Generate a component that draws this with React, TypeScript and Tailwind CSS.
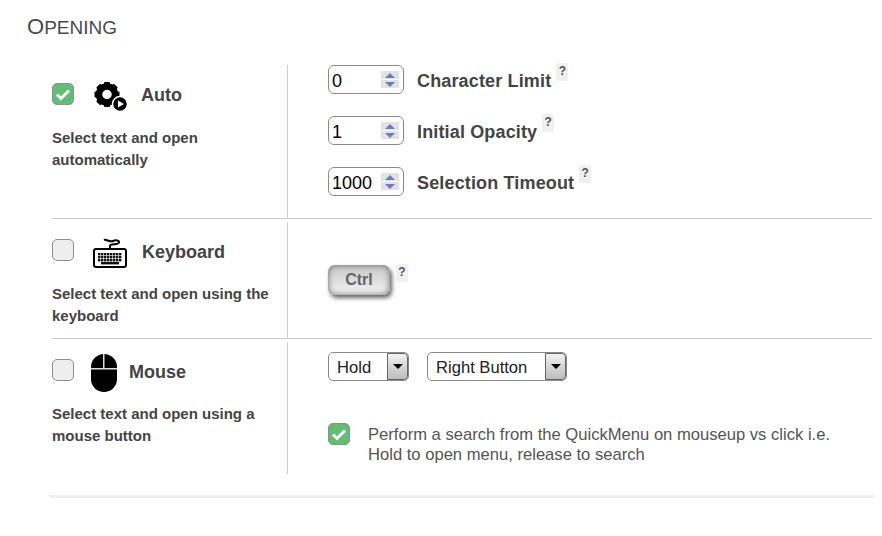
import React from 'react';

function Check({ on, className }: { on?: boolean; className?: string }) {
    return (
        <div className={`w-[22px] h-[22px] shrink-0 rounded-[5px] border border-[#8f8f8f] flex items-center justify-center ${on ? 'bg-[#62bd75]' : 'bg-[#eeeeee]'} ${className ?? ''}`}>
            {on && (
                <svg width="16" height="14" viewBox="0 0 16 14">
                    <path d="M2 7.5 L6 11.5 L14 3.5" fill="none" stroke="#fff" strokeWidth="3" />
                </svg>
            )}
        </div>
    );
}

function GearIcon() {
    const teeth = [0, 45, 90, 135, 180, 225, 270, 315];
    return (
        <svg width="36" height="33" viewBox="0 0 36 33" className="shrink-0 -mb-[3px]">
            {teeth.map((a) => (
                <rect key={a} x="12" y="3" width="6" height="6" rx="1" fill="#000" transform={`rotate(${a} 15 15.5)`} />
            ))}
            <circle cx="15" cy="15.5" r="8" fill="none" stroke="#000" strokeWidth="6.5" />
            <circle cx="28" cy="25" r="7.5" fill="#000" stroke="#fff" strokeWidth="1.5" />
            <path d="M26 21.5 L32 25 L26 28.5 Z" fill="#fff" />
        </svg>
    );
}

function KeyboardIcon() {
    const rows = [15, 18, 21];
    const cols = [6, 9, 12, 15, 18, 21, 24, 27];
    return (
        <svg width="36" height="30" viewBox="0 0 36 30" className="shrink-0">
            <path d="M18 11 V8 C18 5 26 7.5 27 4.5 C27.5 2 23 2 21 3 C18 4.5 14 1 12 2" fill="none" stroke="#000" strokeWidth="2" />
            <rect x="2" y="11" width="32" height="18" rx="2" fill="#fff" stroke="#000" strokeWidth="2" />
            {rows.map((y) =>
                cols.map((x) => <rect key={`${x}-${y}`} x={x} y={y} width="2.4" height="2.4" fill="#111" />)
            )}
            <rect x="9" y="24" width="18" height="2.4" fill="#111" />
        </svg>
    );
}

function MouseIcon() {
    return (
        <svg width="26" height="38" viewBox="0 0 26 38" className="shrink-0">
            <rect x="0" y="0" width="26" height="38" rx="13" fill="#000" />
            <rect x="12" y="0" width="1.5" height="15" fill="#ddd" />
            <rect x="0" y="14" width="26" height="1.5" fill="#ddd" />
        </svg>
    );
}

function Help({ className }: { className?: string }) {
    return (
        <span className={`w-[12px] h-[18px] bg-[#f0f0f0] rounded-[2px] text-[12px] leading-[16px] font-bold text-[#555] text-center self-start ${className ?? ''}`}>
            ?
        </span>
    );
}

function SpinRow({ value, label }: { value: string; label: string }) {
    return (
        <div className="flex items-start h-[29px]">
            <div className="w-[76px] h-[29px] rounded-[6px] border border-[#8a8a8a] flex items-center justify-between pl-[3px] pr-[4px] text-[18px] text-black">
                <span className="pt-[3px]">{value}</span>
                <div className="w-[18px] h-[17px] flex flex-col gap-px">
                    <div className="flex-1 bg-[#e2e2e2] flex items-center justify-center">
                        <div className="w-0 h-0 border-x-[5px] border-x-transparent border-b-[5px] border-b-[#6c7cc4]" />
                    </div>
                    <div className="flex-1 bg-[#e2e2e2] flex items-center justify-center">
                        <div className="w-0 h-0 border-x-[5px] border-x-transparent border-t-[5px] border-t-[#6c7cc4]" />
                    </div>
                </div>
            </div>
            <span className="ml-[13px] mt-[5px] text-[18px] leading-[22px] tracking-[0.15px] font-bold text-[#444]">{label}</span>
            <Help className="ml-[5px] -mt-[2px]" />
        </div>
    );
}

function FakeSelect({ value, width }: { value: string; width: string }) {
    return (
        <div className={`${width} h-[29px] rounded-[5px] border border-[#8a8a8a] flex items-stretch justify-between text-[16.6px] leading-[29px] text-[#222] overflow-hidden`}>
            <span className="pl-[8px]">{value}</span>
            <div className="w-[21px] bg-gradient-to-b from-[#f2f2f2] to-[#bdbdbd] border border-[#666] rounded-r-[4px] flex items-center justify-center">
                <div className="w-0 h-0 border-x-[5px] border-x-transparent border-t-[5px] border-t-black" />
            </div>
        </div>
    );
}

export default function App() {
    return (
        <div className="w-[882px] h-[536px] bg-white overflow-hidden font-['Liberation_Sans',Arial,sans-serif]">
            <h2 className="pl-[27px] pt-[13px] h-[65px] leading-[28px] text-[#4a4a4a]">
                <span className="text-[22px]">O</span>
                <span className="text-[19px]">PENING</span>
            </h2>

            <div className="ml-[52px] w-[820px]">
                {/* Auto */}
                <div className="flex h-[154px] border-b border-[#cccccc]">
                    <div className="w-[236px] border-r border-[#cccccc] shrink-0 pt-[10px]">
                        <div className="flex items-center h-[38px]">
                            <Check on />
                            <span className="ml-[18px] h-[30px]"><GearIcon /></span>
                            <span className="ml-[13px] pt-[2px] text-[18px] font-bold text-[#444]">Auto</span>
                        </div>
                        <p className="text-[15px] leading-[22px] font-bold text-[#444] mt-[14px]">Select text and open<br />automatically</p>
                    </div>
                    <div className="pl-[40px] flex flex-col gap-[22px]">
                        <SpinRow value="0" label="Character Limit" />
                        <SpinRow value="1" label="Initial Opacity" />
                        <SpinRow value="1000" label="Selection Timeout" />
                    </div>
                </div>

                {/* Keyboard */}
                <div className="flex h-[116px] mt-[3px]">
                    <div className="w-[236px] border-r border-[#cccccc] shrink-0">
                        <div className="flex items-start h-[61px]">
                            <Check className="mt-[17px]" />
                            <span className="ml-[18px] mt-[16px]"><KeyboardIcon /></span>
                            <span className="ml-[14px] mt-[19px] text-[18px] leading-[22px] font-bold text-[#444]">Keyboard</span>
                        </div>
                        <p className="text-[15px] leading-[22px] font-bold text-[#444]">Select text and open using the<br />keyboard</p>
                    </div>
                    <div className="pl-[40px] pt-[43px] flex items-start">
                        <div className="w-[62px] h-[30px] rounded-[7px] bg-gradient-to-b from-[#c8c8c8] to-[#f4f4f4] shadow-[inset_0_0_6px_#666,2px_3px_4px_#666] text-[16px] leading-[30px] font-bold text-[#666] text-center">
                            Ctrl
                        </div>
                        <Help className="ml-[6px] -mt-[1px]" />
                    </div>
                </div>
                <div className="border-b border-[#cccccc]" />

                {/* Mouse */}
                <div className="flex h-[132px] mt-[3px]">
                    <div className="w-[236px] border-r border-[#cccccc] shrink-0">
                        <div className="flex items-start h-[50px]">
                            <Check className="mt-[17px]" />
                            <span className="ml-[17px] mt-[12px]"><MouseIcon /></span>
                            <span className="ml-[12px] mt-[19px] text-[18px] leading-[22px] font-bold text-[#444]">Mouse</span>
                        </div>
                        <p className="text-[15px] leading-[22px] font-bold text-[#444] mt-[11px]">Select text and open using a<br />mouse button</p>
                    </div>
                    <div className="pl-[40px] pt-[10px] flex-1">
                        <div className="flex gap-[18px]">
                            <FakeSelect value="Hold" width="w-[81px]" />
                            <FakeSelect value="Right Button" width="w-[140px]" />
                        </div>
                        <div className="flex mt-[42px]">
                            <Check on />
                            <p className="ml-[18px] mt-[2px] text-[16.6px] leading-[20px] text-[#555]">
                                Perform a search from the QuickMenu on mouseup vs click i.e.<br />
                                Hold to open menu, release to search
                            </p>
                        </div>
                    </div>
                </div>
            </div>

            <div className="ml-[49px] mr-[8px] mt-[21px] h-[3px] bg-[#f0f0f0]" />
        </div>
    );
}
